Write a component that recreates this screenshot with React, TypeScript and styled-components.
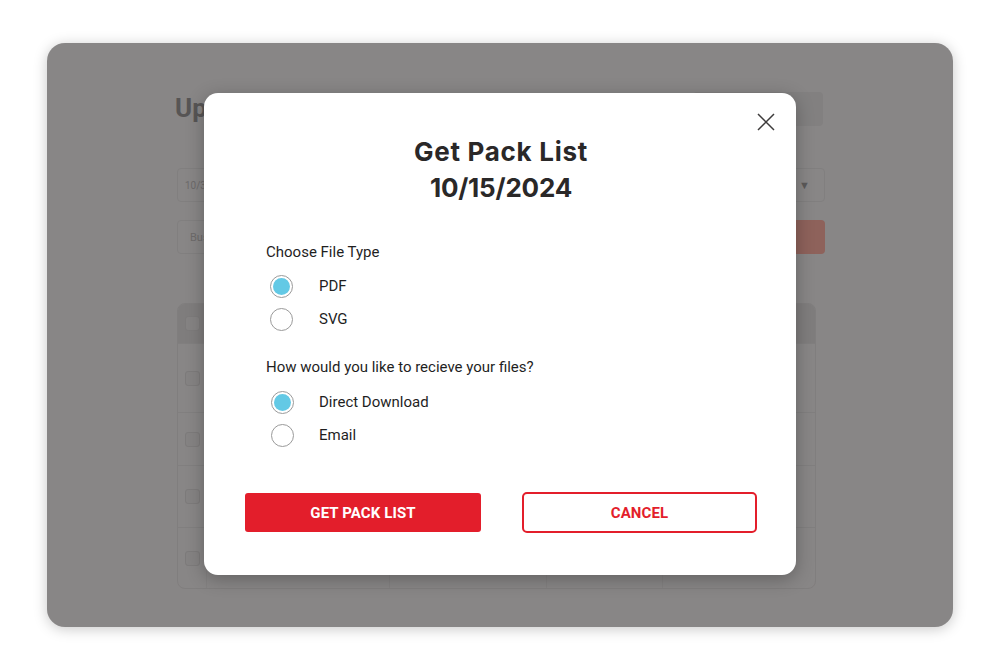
import React, { useState } from "react";
import styled, { createGlobalStyle } from "styled-components";

const Global = createGlobalStyle`
  html, body { margin: 0; padding: 0; background: #ffffff; }
  body { font-family: Roboto, "Liberation Sans", Arial, sans-serif; }
  * { box-sizing: border-box; }
`;

const Page = styled.div`
  width: 1000px;
  height: 671px;
  padding: 43px 47px 44px;
`;

const Card = styled.div`
  position: relative;
  height: 584px;
  border-radius: 18px;
  background: #888686;
  box-shadow: 0 2px 14px rgba(0, 0, 0, 0.22);
  padding: 49px 128px 0 130px;
  overflow: hidden;
`;

const HeaderRow = styled.div`
  display: flex;
  justify-content: space-between;
  align-items: flex-start;
  height: 34px;
`;

const PageTitle = styled.h1`
  margin: 0;
  font-size: 26px;
  line-height: 26px;
  font-weight: 700;
  color: #575555;
  margin-left: -2px;
  margin-top: 3px;
`;

const GhostButton = styled.div`
  width: 130px;
  height: 34px;
  border-radius: 4px;
  background: #828080;
  margin-right: 2px;
`;

const FilterRow = styled.div<{ $top: number }>`
  display: flex;
  gap: 20px;
  margin-top: ${(p) => p.$top}px;
  height: 34px;
`;

const Field = styled.div<{ $grow?: boolean; $w?: number; $size?: number; $pad?: number }>`
  flex: ${(p) => (p.$grow ? "1" : `0 0 ${p.$w}px`)};
  border: 1px solid #817f7f;
  border-radius: 4px;
  display: flex;
  align-items: center;
  justify-content: space-between;
  padding: 0 14px 0 ${(p) => p.$pad ?? 7}px;
  font-size: ${(p) => p.$size ?? 10}px;
  color: #6c6a6a;
`;

const Caret = styled.span`
  margin-left: auto;
  font-size: 11px;
  color: #5b5959;
`;

const MutedRed = styled.div`
  flex: 0 0 125px;
  border-radius: 4px;
  background: #8e625b;
`;

const Table = styled.div`
  margin-top: 49px;
  width: 639px;
  border: 1px solid #807e7e;
  border-radius: 8px;
  overflow: hidden;
`;

const TRow = styled.div<{ $h: number; $head?: boolean }>`
  display: grid;
  grid-template-columns: 29px 183px 157px 116px 1fr;
  height: ${(p) => p.$h}px;
  background: ${(p) => (p.$head ? "#7f7d7d" : "transparent")};
  border-top: ${(p) => (p.$head ? "none" : "1px solid #817f7f")};
`;

const TCell = styled.div`
  border-right: 1px solid #838181;
  display: flex;
  align-items: center;
  justify-content: center;
  &:last-child { border-right: none; }
`;

const Box = styled.span`
  width: 15px;
  height: 15px;
  border: 1px solid #7d7b7b;
  border-radius: 3px;
  background: #858383;
`;

const Overlay = styled.div`
  position: absolute;
  inset: 0;
  display: flex;
  align-items: center;
  justify-content: center;
`;

const Modal = styled.div`
  position: relative;
  width: 592px;
  height: 482px;
  margin-top: -2px;
  background: #ffffff;
  border-radius: 14px;
  box-shadow: 0 4px 18px rgba(0, 0, 0, 0.28);
  padding: 41px 39px 42px 41px;
  display: flex;
  flex-direction: column;
`;

const Close = styled.button`
  position: absolute;
  top: 20px;
  right: 21px;
  width: 18px;
  height: 18px;
  padding: 0;
  border: none;
  background: none;
  cursor: pointer;
  display: flex;
`;

const Title = styled.h2`
  margin: 0;
  text-align: center;
  font-family: Inter, "Open Sans", sans-serif;
  font-weight: 700;
  font-size: 26px;
  line-height: 36px;
  color: #2a2828;
`;

const TitleLine = styled.span<{ $spacing: number }>`
  display: block;
  letter-spacing: ${(p) => p.$spacing}px;
`;

const Section = styled.div<{ $top: number }>`
  margin-top: ${(p) => p.$top}px;
  padding-left: 21px;
`;

const Question = styled.div`
  font-size: 15px;
  line-height: 20px;
  color: #1f1f1f;
`;

const Options = styled.div<{ $top: number }>`
  margin-top: ${(p) => p.$top}px;
  display: flex;
  flex-direction: column;
  gap: 11px;
`;

const Option = styled.label<{ $shift: number }>`
  display: flex;
  align-items: center;
  height: 22px;
  padding-left: ${(p) => p.$shift}px;
  cursor: pointer;
  font-size: 15px;
  color: #1f1f1f;
`;

const Circle = styled.span<{ $on: boolean }>`
  width: 23px;
  height: 23px;
  border-radius: 50%;
  border: 1px solid #9a9a9a;
  display: flex;
  align-items: center;
  justify-content: center;
  flex: 0 0 auto;
  &::after {
    content: "";
    width: 17px;
    height: 17px;
    border-radius: 50%;
    background: ${(p) => (p.$on ? "#63c9e5" : "transparent")};
  }
`;

const OptionText = styled.span<{ $gap: number }>`
  margin-left: ${(p) => p.$gap}px;
`;

const Actions = styled.div`
  margin-top: auto;
  display: grid;
  grid-template-columns: 236px 235px;
  justify-content: space-between;
  align-items: center;
`;

const Primary = styled.button`
  height: 39px;
  border: none;
  border-radius: 3px;
  background: #e31e2b;
  color: #ffffff;
  font-family: Roboto, "Liberation Sans", sans-serif;
  font-weight: 700;
  font-size: 15px;
  letter-spacing: 0.1px;
  cursor: pointer;
`;

const Secondary = styled.button`
  height: 41px;
  border: 2px solid #e31e2b;
  border-radius: 5px;
  background: #ffffff;
  color: #e31e2b;
  font-family: Roboto, "Liberation Sans", sans-serif;
  font-weight: 700;
  font-size: 15px;
  letter-spacing: 0.1px;
  cursor: pointer;
`;

type Opt = { label: string };

function RadioGroup({
  options,
  value,
  onChange,
  shift,
  gap,
  top,
}: {
  options: Opt[];
  value: string;
  onChange: (v: string) => void;
  shift: number;
  gap: number;
  top: number;
}) {
  return (
    <Options $top={top}>
      {options.map((o) => (
        <Option key={o.label} $shift={shift} onClick={() => onChange(o.label)}>
          <Circle $on={value === o.label} />
          <OptionText $gap={gap}>{o.label}</OptionText>
        </Option>
      ))}
    </Options>
  );
}

export default function App() {
  const [fileType, setFileType] = useState("PDF");
  const [delivery, setDelivery] = useState("Direct Download");
  const rows = [69, 53, 62, 61];
  return (
    <Page>
      <Global />
      <Card>
        <HeaderRow>
          <PageTitle>Upload Pack Lists</PageTitle>
          <GhostButton />
        </HeaderRow>
        <FilterRow $top={42}>
          <Field $grow>10/31/2024</Field>
          <Field $w={300}>
            <Caret>▼</Caret>
          </Field>
        </FilterRow>
        <FilterRow $top={18}>
          <Field $grow $size={11} $pad={12}>Business</Field>
          <MutedRed />
        </FilterRow>
        <Table>
          <TRow $h={39} $head>
            <TCell><Box /></TCell>
            <TCell />
            <TCell />
            <TCell />
            <TCell />
          </TRow>
          {rows.map((h, i) => (
            <TRow key={i} $h={h}>
              <TCell><Box /></TCell>
              <TCell />
              <TCell />
              <TCell />
              <TCell />
            </TRow>
          ))}
        </Table>
        <Overlay>
          <Modal>
            <Close aria-label="Close">
              <svg width="18" height="18" viewBox="0 0 18 18">
                <path d="M1 1 L17 17 M17 1 L1 17" stroke="#3d3b3b" strokeWidth="1.5" fill="none" />
              </svg>
            </Close>
            <Title>
              <TitleLine $spacing={0.7}>Get Pack List</TitleLine>
              <TitleLine $spacing={-0.2}>10/15/2024</TitleLine>
            </Title>
            <Section $top={36}>
              <Question>Choose File Type</Question>
              <RadioGroup
                top={13}
                shift={4}
                gap={26}
                options={[{ label: "PDF" }, { label: "SVG" }]}
                value={fileType}
                onChange={setFileType}
              />
            </Section>
            <Section $top={27}>
              <Question>How would you like to recieve your files?</Question>
              <RadioGroup
                top={14}
                shift={5}
                gap={25}
                options={[{ label: "Direct Download" }, { label: "Email" }]}
                value={delivery}
                onChange={setDelivery}
              />
            </Section>
            <Actions>
              <Primary>GET PACK LIST</Primary>
              <Secondary>CANCEL</Secondary>
            </Actions>
          </Modal>
        </Overlay>
      </Card>
    </Page>
  );
}
